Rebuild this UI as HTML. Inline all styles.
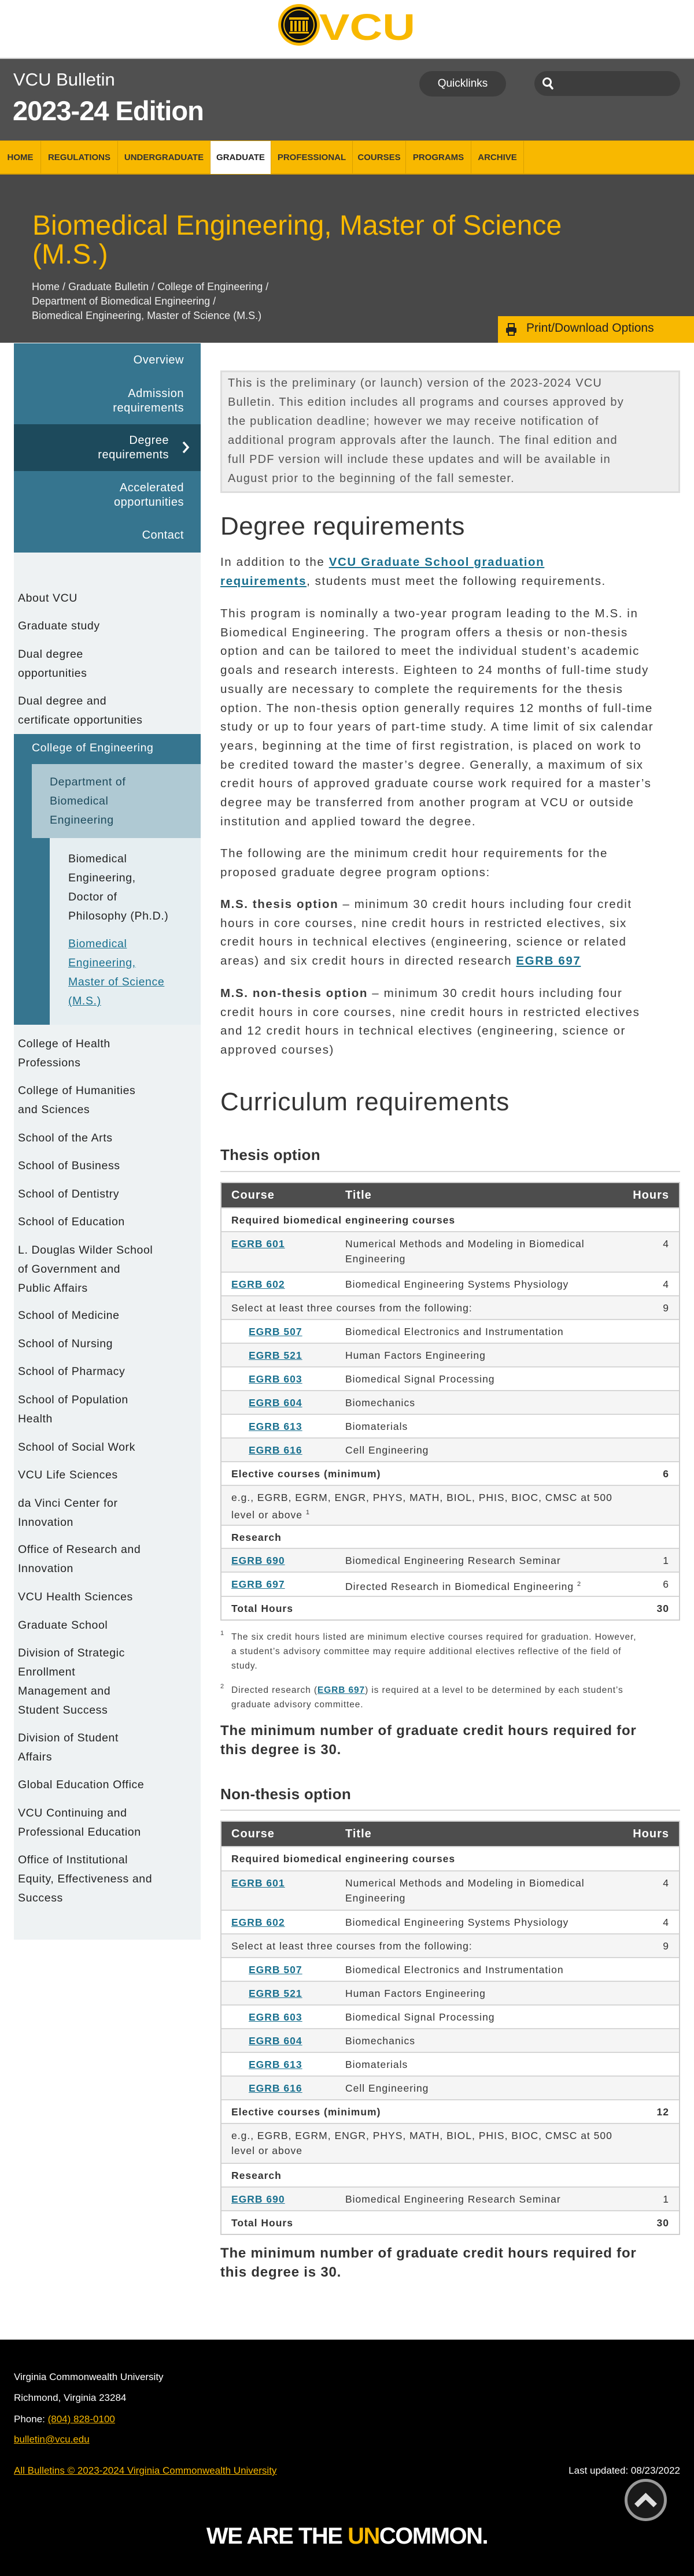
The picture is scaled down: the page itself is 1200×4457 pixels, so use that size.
<!DOCTYPE html>
<html><head><meta charset="utf-8">
<style>
*{margin:0;padding:0;box-sizing:border-box}
body{width:1200px;height:4457px;position:relative;background:#fff;font-family:"Liberation Sans",sans-serif;color:#333;overflow:hidden}
.a{position:absolute;white-space:nowrap}
.hdr{position:absolute;left:0;top:100px;width:1200px;height:143px;background:#505050;border-top:2px solid #ccc}
.nav{position:absolute;left:0;top:243px;width:1200px;height:59px;background:#f8b800;border-top:1px solid #d9a000;border-bottom:2px solid #d9a000}
.nav div{position:absolute;top:0;height:57px;line-height:57px;text-align:center;font-weight:bold;font-size:15px;color:#333;border-right:1px solid #d9a000}
.band{position:absolute;left:0;top:302px;width:1200px;height:291px;background:#484848}
.side{position:absolute;left:24px;width:323px}
.sn{position:absolute;right:29px;text-align:right;color:#fff;font-size:20px;line-height:25px;white-space:nowrap;letter-spacing:0.5px}
.sl{position:absolute;left:31px;font-size:19.5px;line-height:33px;color:#222;white-space:nowrap;letter-spacing:0.6px}
.p{position:absolute;left:381px;font-size:20.5px;line-height:32.7px;white-space:nowrap;color:#3a3a3a;letter-spacing:1.6px}
a{color:#19708f;font-weight:bold;text-decoration:underline}
.tbl{position:absolute;left:381px;width:795px;border:2px solid #cfcfcf;font-size:17.5px;color:#333;letter-spacing:1px}
.r{position:relative;border-top:2px solid #d6d6d6;line-height:26px;padding-top:7px}
.r.g{background:#f5f5f5}
.r.th{background:#4d4d4d;color:#fff;font-weight:bold;font-size:20px;border-top:none;padding-top:8px}
.c1{position:absolute;left:17px}
.c1i{position:absolute;left:47px}
.c2{position:absolute;left:214px}
.c3{position:absolute;right:17px}
.b{font-weight:bold}
.fn{position:absolute;left:381px;font-size:15.5px;line-height:25px;color:#444;white-space:nowrap;letter-spacing:0.9px}
.fn sup{position:absolute;left:0;top:-6px;font-size:11px}
.fn div{margin-left:19px}
.ft{position:absolute;left:24px;color:#fff;font-size:17px;white-space:nowrap}
.ft a{color:#f8b800;font-weight:normal}
</style></head><body>

<svg class="a" style="left:478px;top:6px" width="245" height="76" viewBox="0 0 245 76">
<circle cx="39" cy="37" r="36" fill="#f8b800"/>
<circle cx="39" cy="37" r="31" fill="#111"/>
<circle cx="39" cy="37" r="26" fill="none" stroke="#f8b800" stroke-width="2"/>
<rect x="22" y="24" width="34" height="4" fill="#f8b800"/>
<rect x="24" y="30" width="4" height="18" fill="#f8b800"/><rect x="31" y="30" width="4" height="18" fill="#f8b800"/>
<rect x="38" y="30" width="4" height="18" fill="#f8b800"/><rect x="45" y="30" width="4" height="18" fill="#f8b800"/><rect x="51" y="30" width="3" height="18" fill="#f8b800"/>
<rect x="22" y="49" width="34" height="3" fill="#f8b800"/>
<text x="74" y="63" font-family="Liberation Sans" font-weight="bold" font-size="64" fill="#f8b800" textLength="166" lengthAdjust="spacingAndGlyphs">VCU</text>
</svg>

<div class="hdr"></div>
<div class="a" style="left:23px;top:120px;color:#fff;font-size:31px">VCU Bulletin</div>
<div class="a" style="left:22px;top:164px;color:#fff;font-size:47px;font-weight:bold;letter-spacing:-1px">2023-24 Edition</div>
<div class="a" style="left:725px;top:123px;width:150px;height:44px;border-radius:22px;background:#3d3d3d;color:#fff;font-size:19px;line-height:44px;text-align:center">Quicklinks</div>
<div class="a" style="left:924px;top:123px;width:252px;height:43px;border-radius:22px;background:#3d3d3d"></div>
<svg class="a" style="left:937px;top:133px" width="22" height="24" viewBox="0 0 22 24"><circle cx="9" cy="9" r="6.5" fill="none" stroke="#fff" stroke-width="3"/><path d="M13 14l5 6" stroke="#fff" stroke-width="3.5" stroke-linecap="round"/></svg>

<div class="nav">
<div style="left:0;width:71px">HOME</div>
<div style="left:71px;width:133px">REGULATIONS</div>
<div style="left:204px;width:160px">UNDERGRADUATE</div>
<div style="left:364px;width:105px;background:#fff;color:#222">GRADUATE</div>
<div style="left:469px;width:141px">PROFESSIONAL</div>
<div style="left:610px;width:92px">COURSES</div>
<div style="left:702px;width:113px">PROGRAMS</div>
<div style="left:815px;width:91px">ARCHIVE</div>
</div>

<div class="band"></div>
<div class="a" style="left:56px;top:366px;color:#f8b800;font-size:48px;line-height:50px;letter-spacing:0px">Biomedical Engineering, Master of Science<br>(M.S.)</div>
<div class="a" style="left:55px;top:484px;color:#eee;font-size:18px;line-height:25px">Home / Graduate Bulletin / College of Engineering /<br>Department of Biomedical Engineering /<br>Biomedical Engineering, Master of Science (M.S.)</div>
<div class="a" style="left:861px;top:547px;width:339px;height:46px;background:#f8b800"></div>
<svg class="a" style="left:874px;top:558px" width="20" height="24" viewBox="0 0 20 24"><rect x="5" y="2" width="10" height="7" fill="none" stroke="#222" stroke-width="2"/><rect x="1" y="9" width="18" height="9" rx="2" fill="#222"/><rect x="5" y="15" width="10" height="7" fill="#f8b800" stroke="#222" stroke-width="2"/></svg>
<div class="a" style="left:910px;top:556px;color:#222;font-size:21px">Print/Download Options</div>

<div class="side" style="top:594px;height:362px;background:#36758f"></div>
<div class="side" style="top:734px;height:81px;background:#1d4a5c"></div>
<div class="sn" style="left:24px;width:294px;right:auto;top:611px">Overview</div>
<div class="sn" style="left:24px;width:294px;right:auto;top:669px">Admission<br>requirements</div>
<div class="sn" style="left:24px;width:268px;right:auto;top:750px">Degree<br>requirements</div>
<svg class="a" style="left:314px;top:762px" width="14" height="24" viewBox="0 0 14 24"><path d="M3 3l8 9-8 9" fill="none" stroke="#fff" stroke-width="3.5"/></svg>
<div class="sn" style="left:24px;width:294px;right:auto;top:832px">Accelerated<br>opportunities</div>
<div class="sn" style="left:24px;width:294px;right:auto;top:914px">Contact</div>

<div class="side" style="top:956px;height:2400px;background:#eef2f3"></div>
<div class="side" style="top:1270px;height:503px;background:#36758f"></div>
<div class="a" style="left:55px;top:1322px;width:292px;height:128px;background:#afc9d3"></div>
<div class="a" style="left:86px;top:1450px;width:261px;height:323px;background:#e6eef1"></div>
<div class="a" style="left:55px;top:1283px;color:#fff;font-size:19.5px;letter-spacing:0.6px">College of Engineering</div>
<div class="a" style="left:86px;top:1337px;color:#1d4a5c;font-size:19.5px;line-height:33px;letter-spacing:0.6px">Department of<br>Biomedical<br>Engineering</div>
<div class="a" style="left:118px;top:1470px;color:#222;font-size:19.5px;line-height:33px;letter-spacing:0.6px">Biomedical<br>Engineering,<br>Doctor of<br>Philosophy (Ph.D.)</div>
<div class="a" style="left:118px;top:1617px;font-size:19.5px;line-height:33px;letter-spacing:0.6px"><span style="color:#19708f;text-decoration:underline">Biomedical<br>Engineering,<br>Master of Science<br>(M.S.)</span></div>

<div class="sl" style="top:1019px">About VCU</div>
<div class="sl" style="top:1067px">Graduate study</div>
<div class="sl" style="top:1116px">Dual degree<br>opportunities</div>
<div class="sl" style="top:1197px">Dual degree and<br>certificate opportunities</div>
<div class="sl" style="top:1790px">College of Health<br>Professions</div>
<div class="sl" style="top:1871px">College of Humanities<br>and Sciences</div>
<div class="sl" style="top:1953px">School of the Arts</div>
<div class="sl" style="top:2001px">School of Business</div>
<div class="sl" style="top:2050px">School of Dentistry</div>
<div class="sl" style="top:2098px">School of Education</div>
<div class="sl" style="top:2147px">L. Douglas Wilder School<br>of Government and<br>Public Affairs</div>
<div class="sl" style="top:2260px">School of Medicine</div>
<div class="sl" style="top:2309px">School of Nursing</div>
<div class="sl" style="top:2357px">School of Pharmacy</div>
<div class="sl" style="top:2406px">School of Population<br>Health</div>
<div class="sl" style="top:2488px">School of Social Work</div>
<div class="sl" style="top:2536px">VCU Life Sciences</div>
<div class="sl" style="top:2585px">da Vinci Center for<br>Innovation</div>
<div class="sl" style="top:2665px">Office of Research and<br>Innovation</div>
<div class="sl" style="top:2747px">VCU Health Sciences</div>
<div class="sl" style="top:2796px">Graduate School</div>
<div class="sl" style="top:2844px">Division of Strategic<br>Enrollment<br>Management and<br>Student Success</div>
<div class="sl" style="top:2991px">Division of Student<br>Affairs</div>
<div class="sl" style="top:3072px">Global Education Office</div>
<div class="sl" style="top:3121px">VCU Continuing and<br>Professional Education</div>
<div class="sl" style="top:3202px">Office of Institutional<br>Equity, Effectiveness and<br>Success</div>

<div class="a" style="left:381px;top:641px;width:795px;height:212px;background:#eee;border:3px solid #ddd"></div>
<div class="p" style="left:394px;top:647px;color:#555;font-size:20px;line-height:33px;letter-spacing:1.2px">This is the preliminary (or launch) version of the 2023-2024 VCU<br>Bulletin. This edition includes all programs and courses approved by<br>the publication deadline; however we may receive notification of<br>additional program approvals after the launch. The final edition and<br>full PDF version will include these updates and will be available in<br>August prior to the beginning of the fall semester.</div>

<div class="p" style="top:886px;font-size:44px;line-height:50px;color:#333;letter-spacing:0.5px">Degree requirements</div>
<div class="p" style="top:957px">In addition to the <a>VCU Graduate School graduation<br>requirements</a>, students must meet the following requirements.</div>
<div class="p" style="top:1046px">This program is nominally a two-year program leading to the M.S. in<br>Biomedical Engineering. The program offers a thesis or non-thesis<br>option and can be tailored to meet the individual student’s academic<br>goals and research interests. Eighteen to 24 months of full-time study<br>usually are necessary to complete the requirements for the thesis<br>option. The non-thesis option generally requires 12 months of full-time<br>study or up to four years of part-time study. A time limit of six calendar<br>years, beginning at the time of first registration, is placed on work to<br>be credited toward the master’s degree. Generally, a maximum of six<br>credit hours of approved graduate course work required for a master’s<br>degree may be transferred from another program at VCU or outside<br>institution and applied toward the degree.</div>
<div class="p" style="top:1461px">The following are the minimum credit hour requirements for the<br>proposed graduate degree program options:</div>
<div class="p" style="top:1549px"><b>M.S. thesis option</b> – minimum 30 credit hours including four credit<br>hours in core courses, nine credit hours in restricted electives, six<br>credit hours in technical electives (engineering, science or related<br>areas) and six credit hours in directed research <a>EGRB 697</a></div>
<div class="p" style="top:1703px"><b>M.S. non-thesis option</b> – minimum 30 credit hours including four<br>credit hours in core courses, nine credit hours in restricted electives<br>and 12 credit hours in technical electives (engineering, science or<br>approved courses)</div>
<div class="p" style="top:1882px;font-size:44px;line-height:50px;color:#333;letter-spacing:0.8px">Curriculum requirements</div>
<div class="p" style="top:1982px;font-size:26px;font-weight:bold;color:#333;letter-spacing:0.3px">Thesis option</div>
<div class="a" style="left:381px;top:2026px;width:795px;height:2px;background:#d6d6d6"></div>

<div class="tbl" style="top:2045px">
<div class="r th" style="height:42px"><span class="c1">Course</span><span class="c2">Title</span><span class="c3">Hours</span></div>
<div class="r b" style="height:41px"><span class="c1">Required biomedical engineering courses</span></div>
<div class="r g" style="height:70px"><span class="c1"><a>EGRB 601</a></span><span class="c2">Numerical Methods and Modeling in Biomedical<br>Engineering</span><span class="c3">4</span></div>
<div class="r" style="height:41px"><span class="c1"><a>EGRB 602</a></span><span class="c2">Biomedical Engineering Systems Physiology</span><span class="c3">4</span></div>
<div class="r g" style="height:41px"><span class="c1">Select at least three courses from the following:</span><span class="c3">9</span></div>
<div class="r" style="height:41px"><span class="c1i"><a>EGRB 507</a></span><span class="c2">Biomedical Electronics and Instrumentation</span></div>
<div class="r g" style="height:41px"><span class="c1i"><a>EGRB 521</a></span><span class="c2">Human Factors Engineering</span></div>
<div class="r" style="height:41px"><span class="c1i"><a>EGRB 603</a></span><span class="c2">Biomedical Signal Processing</span></div>
<div class="r g" style="height:41px"><span class="c1i"><a>EGRB 604</a></span><span class="c2">Biomechanics</span></div>
<div class="r" style="height:41px"><span class="c1i"><a>EGRB 613</a></span><span class="c2">Biomaterials</span></div>
<div class="r g" style="height:41px"><span class="c1i"><a>EGRB 616</a></span><span class="c2">Cell Engineering</span></div>
<div class="r b" style="height:41px"><span class="c1">Elective courses (minimum)</span><span class="c3">6</span></div>
<div class="r g" style="height:69px"><span class="c1">e.g., EGRB, EGRM, ENGR, PHYS, MATH, BIOL, PHIS, BIOC, CMSC at 500<br>level or above <sup style="font-size:11px">1</sup></span></div>
<div class="r b" style="height:40px"><span class="c1">Research</span></div>
<div class="r g" style="height:41px"><span class="c1"><a>EGRB 690</a></span><span class="c2">Biomedical Engineering Research Seminar</span><span class="c3">1</span></div>
<div class="r" style="height:42px"><span class="c1"><a>EGRB 697</a></span><span class="c2">Directed Research in Biomedical Engineering <sup style="font-size:11px">2</sup></span><span class="c3">6</span></div>
<div class="r b" style="height:41px"><span class="c1">Total Hours</span><span class="c3">30</span></div>
</div>

<div class="fn" style="top:2820px"><sup>1</sup><div>The six credit hours listed are minimum elective courses required for graduation. However,<br>a student’s advisory committee may require additional electives reflective of the field of<br>study.</div></div>
<div class="fn" style="top:2912px"><sup>2</sup><div>Directed research (<a>EGRB 697</a>) is required at a level to be determined by each student’s<br>graduate advisory committee.</div></div>
<div class="p" style="top:2978px;font-size:24px;font-weight:bold;line-height:33px;color:#333;letter-spacing:0.8px">The minimum number of graduate credit hours required for<br>this degree is 30.</div>

<div class="p" style="top:3088px;font-size:26px;font-weight:bold;color:#333;letter-spacing:0.3px">Non-thesis option</div>
<div class="a" style="left:381px;top:3131px;width:795px;height:2px;background:#d6d6d6"></div>

<div class="tbl" style="top:3150px">
<div class="r th" style="height:42px"><span class="c1">Course</span><span class="c2">Title</span><span class="c3">Hours</span></div>
<div class="r b" style="height:42px"><span class="c1">Required biomedical engineering courses</span></div>
<div class="r g" style="height:68px"><span class="c1"><a>EGRB 601</a></span><span class="c2">Numerical Methods and Modeling in Biomedical<br>Engineering</span><span class="c3">4</span></div>
<div class="r" style="height:41px"><span class="c1"><a>EGRB 602</a></span><span class="c2">Biomedical Engineering Systems Physiology</span><span class="c3">4</span></div>
<div class="r g" style="height:41px"><span class="c1">Select at least three courses from the following:</span><span class="c3">9</span></div>
<div class="r" style="height:41px"><span class="c1i"><a>EGRB 507</a></span><span class="c2">Biomedical Electronics and Instrumentation</span></div>
<div class="r g" style="height:41px"><span class="c1i"><a>EGRB 521</a></span><span class="c2">Human Factors Engineering</span></div>
<div class="r" style="height:41px"><span class="c1i"><a>EGRB 603</a></span><span class="c2">Biomedical Signal Processing</span></div>
<div class="r g" style="height:41px"><span class="c1i"><a>EGRB 604</a></span><span class="c2">Biomechanics</span></div>
<div class="r" style="height:41px"><span class="c1i"><a>EGRB 613</a></span><span class="c2">Biomaterials</span></div>
<div class="r g" style="height:41px"><span class="c1i"><a>EGRB 616</a></span><span class="c2">Cell Engineering</span></div>
<div class="r b" style="height:41px"><span class="c1">Elective courses (minimum)</span><span class="c3">12</span></div>
<div class="r g" style="height:69px"><span class="c1">e.g., EGRB, EGRM, ENGR, PHYS, MATH, BIOL, PHIS, BIOC, CMSC at 500<br>level or above</span></div>
<div class="r b" style="height:41px"><span class="c1">Research</span></div>
<div class="r g" style="height:41px"><span class="c1"><a>EGRB 690</a></span><span class="c2">Biomedical Engineering Research Seminar</span><span class="c3">1</span></div>
<div class="r b" style="height:41px"><span class="c1">Total Hours</span><span class="c3">30</span></div>
</div>
<div class="p" style="top:3882px;font-size:24px;font-weight:bold;line-height:33px;color:#333;letter-spacing:0.8px">The minimum number of graduate credit hours required for<br>this degree is 30.</div>

<div class="a" style="left:0;top:4048px;width:1200px;height:409px;background:#000"></div>
<div class="ft" style="top:4103px">Virginia Commonwealth University</div>
<div class="ft" style="top:4139px">Richmond, Virginia 23284</div>
<div class="ft" style="top:4176px">Phone: <a>(804) 828-0100</a></div>
<div class="ft" style="top:4211px"><a>bulletin@vcu.edu</a></div>
<div class="ft" style="top:4265px"><a>All Bulletins © 2023-2024 Virginia Commonwealth University</a></div>
<div class="ft" style="left:auto;right:24px;top:4265px">Last updated: 08/23/2022</div>
<svg class="a" style="left:1079px;top:4288px" width="75" height="75" viewBox="0 0 75 75"><circle cx="37.5" cy="37.5" r="34" fill="#1a1a1a" stroke="#999" stroke-width="5"/><path d="M18 44l19.5-19 19.5 19-6 6-13.5-13-13.5 13z" fill="#ddd"/></svg>
<div class="a" style="left:0;width:1200px;top:4366px;text-align:center;color:#fff;font-size:40px;font-weight:bold;letter-spacing:-1.5px">WE ARE THE <span style="color:#f8b800">UN</span>COMMON.</div>
</body></html>
